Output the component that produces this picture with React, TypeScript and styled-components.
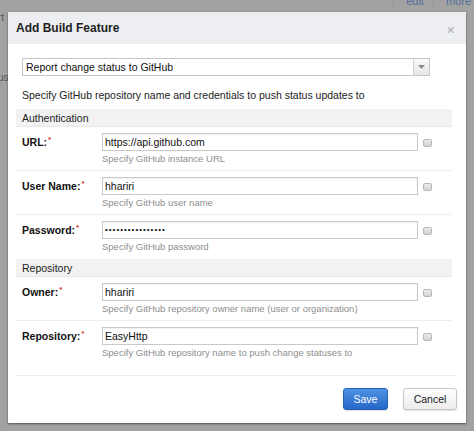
import * as React from 'react';
import styled, { createGlobalStyle } from 'styled-components';

const GlobalStyle = createGlobalStyle`
    html, body {
        margin: 0;
        padding: 0;
        width: 474px;
        height: 431px;
        overflow: hidden;
        background: #a2a2a2;
        font-family: "Liberation Sans", Arial, sans-serif;
        font-size: 10.5px;
        color: #222;
    }
`;

const Backdrop = styled.div`
    position: relative;
    width: 474px;
    height: 431px;
    background: #a2a2a2;
    padding: 12px 8px 0 8px;
    box-sizing: border-box;
    overflow: hidden;
`;

const BehindLinks = styled.div`
    position: absolute;
    top: -5px;
    right: 0;
    display: flex;
`;

const BehindLink = styled.span`
    color: #4f6f9c;
    font-size: 11px;
    padding: 0 3px 0 12px;
    border-left: 1px solid #959595;
    line-height: 12px;
    & + & {
        margin-left: 6px;
    }
`;

const BehindText = styled.span<{ top: number }>`
    position: absolute;
    left: -2px;
    top: ${({ top }) => top}px;
    font-size: 10px;
    color: #555;
`;

const Dialog = styled.div`
    position: relative;
    width: 458px;
    background: #fff;
    box-shadow: 0 1px 2px rgba(0, 0, 0, 0.5);
    display: flex;
    flex-direction: column;
`;

const Header = styled.div`
    height: 32px;
    flex-shrink: 0;
    background: #eceef1;
    display: flex;
    align-items: center;
    justify-content: space-between;
    padding: 0 11px 0 8px;
`;

const Title = styled.h1`
    margin: 0;
    font-family: "Liberation Sans", Arial, sans-serif;
    font-size: 12px;
    font-weight: 700;
    color: #1e1e1e;
`;

const Close = styled.span`
    color: #b0b0b0;
    font-size: 11px;
    padding-top: 4px;
`;

const Body = styled.div`
    padding: 14px 14px 0 8px;
    display: flex;
    flex-direction: column;
`;

const SelectBox = styled.div`
    margin-left: 6px;
    width: 408px;
    height: 18px;
    border: 1px solid #c6c6c6;
    box-sizing: border-box;
    display: flex;
    align-items: center;
    background: #fff;
`;

const SelectText = styled.span`
    flex: 1;
    padding-left: 3px;
    font-size: 10.5px;
    color: #111;
`;

const SelectArrow = styled.span`
    width: 15px;
    height: 16px;
    border-left: 1px solid #d6d6d6;
    background: linear-gradient(#fafafa, #e6e6e6);
    display: flex;
    align-items: center;
    justify-content: center;
`;

const Description = styled.p`
    margin: 13px 0 8px 6px;
    line-height: 12px;
    font-size: 10.5px;
    color: #222;
`;

const SectionHeader = styled.div`
    height: 17px;
    flex-shrink: 0;
    background: #f2f2f2;
    border-bottom: 1px solid #e8e8e8;
    display: flex;
    align-items: center;
    padding-left: 6px;
    font-size: 10.5px;
    color: #222;
`;

const Row = styled.div<{ last?: boolean }>`
    display: grid;
    grid-template-columns: 80px 316px 18px;
    align-items: start;
    padding: 6px 0 5px 6px;
    border-bottom: 1px solid ${({ last }) => (last ? 'transparent' : '#ededed')};
`;

const Label = styled.label`
    font-weight: 700;
    font-size: 10.5px;
    line-height: 18px;
    color: #111;
`;

const Star = styled.span`
    color: #d0302a;
    font-weight: 700;
    font-size: 8px;
    vertical-align: top;
    line-height: 14px;
    margin-left: 1px;
`;

const FieldCol = styled.div`
    display: flex;
    flex-direction: column;
`;

const TextInput = styled.div`
    height: 18px;
    border: 1px solid #c9c9c9;
    box-shadow: inset 0 1px 1px rgba(0, 0, 0, 0.06);
    box-sizing: border-box;
    padding-left: 2px;
    display: flex;
    align-items: center;
    font-size: 10.5px;
    color: #111;
`;

const Dots = styled.span`
    font-size: 8px;
    letter-spacing: 1px;
    line-height: 1;
`;

const Help = styled.span`
    color: #8e8e8e;
    font-size: 9.5px;
    line-height: 12px;
    margin-top: 2px;
`;

const Check = styled.span`
    width: 7px;
    height: 6px;
    margin: 6px 0 0 5px;
    border: 1px solid #b8b8b8;
    border-radius: 2px;
    background: linear-gradient(#ececec, #d2d2d2);
`;

const Footer = styled.div`
    margin: 10px 9px 0 8px;
    border-top: 1px solid #ececec;
    display: flex;
    justify-content: flex-end;
    gap: 15px;
    padding: 12px 0 13px 0;
`;

const Button = styled.button<{ primary?: boolean }>`
    height: 22px;
    width: ${({ primary }) => (primary ? '45px' : '54px')};
    padding: 0;
    border-radius: 3px;
    font-family: "Liberation Sans", Arial, sans-serif;
    font-size: 10.5px;
    border: 1px solid ${({ primary }) => (primary ? '#2460b8' : '#c8c8c8')};
    color: ${({ primary }) => (primary ? '#fff' : '#222')};
    background: ${({ primary }) =>
        primary ? 'linear-gradient(#4f91e2, #2467c9)' : 'linear-gradient(#ffffff, #ececec)'};
    box-shadow: 0 1px 1px rgba(0, 0, 0, 0.12);
`;

interface FieldProps {
    label: string;
    value: React.ReactNode;
    help: string;
    last?: boolean;
}

const Field: React.FC<FieldProps> = ({ label, value, help, last }) => (
    <Row last={last}>
        <Label>
            {label}:<Star>*</Star>
        </Label>
        <FieldCol>
            <TextInput>{value}</TextInput>
            <Help>{help}</Help>
        </FieldCol>
        <Check />
    </Row>
);

export default function App() {
    return (
        <>
            <GlobalStyle />
            <Backdrop>
                <BehindText top={12}>rt</BehindText>
                <BehindText top={72}>us</BehindText>
                <BehindLinks>
                    <BehindLink>edit</BehindLink>
                    <BehindLink>more</BehindLink>
                </BehindLinks>
                <Dialog>
                    <Header>
                        <Title>Add Build Feature</Title>
                        <Close>✕</Close>
                    </Header>
                    <Body>
                        <SelectBox>
                            <SelectText>Report change status to GitHub</SelectText>
                            <SelectArrow>
                                <svg width="7" height="4" viewBox="0 0 7 4">
                                    <path d="M0 0h7L3.5 4z" fill="#8a8a8a" />
                                </svg>
                            </SelectArrow>
                        </SelectBox>
                        <Description>
                            Specify GitHub repository name and credentials to push status updates to
                        </Description>
                        <SectionHeader>Authentication</SectionHeader>
                        <Field label="URL" value="https://api.github.com" help="Specify GitHub instance URL" />
                        <Field label="User Name" value="hhariri" help="Specify GitHub user name" />
                        <Field
                            label="Password"
                            value={<Dots>••••••••••••••••</Dots>}
                            help="Specify GitHub password"
                            last
                        />
                        <SectionHeader>Repository</SectionHeader>
                        <Field
                            label="Owner"
                            value="hhariri"
                            help="Specify GitHub repository owner name (user or organization)"
                        />
                        <Field
                            label="Repository"
                            value="EasyHttp"
                            help="Specify GitHub repository name to push change statuses to"
                            last
                        />
                    </Body>
                    <Footer>
                        <Button primary>Save</Button>
                        <Button>Cancel</Button>
                    </Footer>
                </Dialog>
            </Backdrop>
        </>
    );
}
